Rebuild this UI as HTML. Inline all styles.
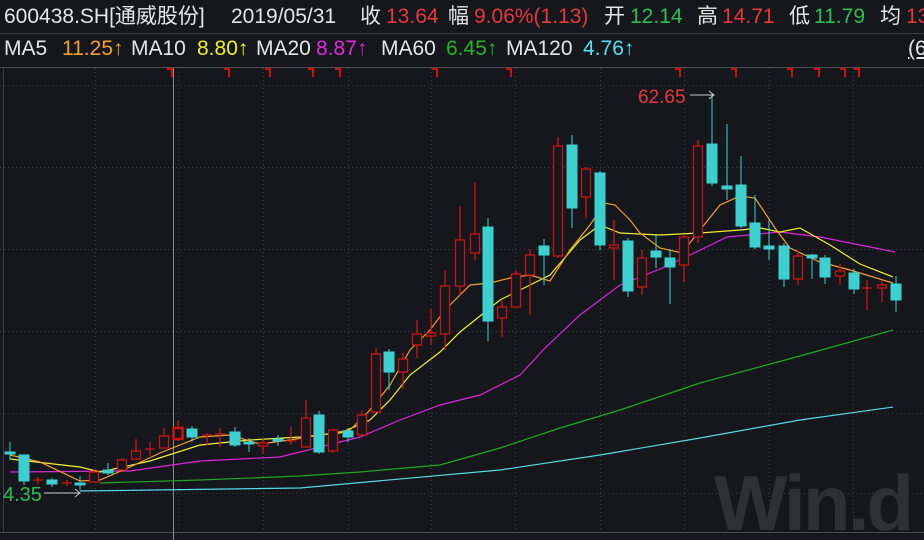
<!DOCTYPE html>
<html><head><meta charset="utf-8"><style>
body{margin:0;width:924px;height:540px;background:#15171c;overflow:hidden;font-family:"Liberation Sans","Noto Sans CJK SC",sans-serif;}
.t{position:absolute;font-size:21px;line-height:24px;white-space:nowrap;color:#e6e6e6;top:5px}
.m{top:37px}
.r{color:#e8383c}.g{color:#2bbf52}
</style></head><body>
<div class="t" style="left:4px">600438.SH[通威股份]</div>
<div class="t" style="left:231px">2019/05/31</div>
<div class="t" style="left:360px">收</div><div class="t r" style="left:386px">13.64</div>
<div class="t" style="left:448px">幅</div><div class="t r" style="left:474px">9.06%(1.13)</div>
<div class="t" style="left:604px">开</div><div class="t g" style="left:630px">12.14</div>
<div class="t" style="left:697px">高</div><div class="t r" style="left:722px">14.71</div>
<div class="t" style="left:789px">低</div><div class="t g" style="left:814px">11.79</div>
<div class="t" style="left:880px">均</div><div class="t r" style="left:906px">13</div>
<div class="t m" style="left:4px">MA5</div><div class="t m" style="left:62px;color:#f0a028">11.25↑</div>
<div class="t m" style="left:131px">MA10</div><div class="t m" style="left:197px;color:#f0f020">8.80↑</div>
<div class="t m" style="left:256px">MA20</div><div class="t m" style="left:316px;color:#e028e0">8.87↑</div>
<div class="t m" style="left:381px">MA60</div><div class="t m" style="left:446px;color:#22b422">6.45↑</div>
<div class="t m" style="left:506px">MA120</div><div class="t m" style="left:583px;color:#50e0f0">4.76↑</div>
<div class="t m" style="left:908px;text-decoration:underline">(6</div>
<svg width="924" height="540" style="position:absolute;left:0;top:0" xmlns="http://www.w3.org/2000/svg">
<line x1="0" y1="33.5" x2="924" y2="33.5" stroke="#3a3c42"/>
<line x1="0" y1="67.5" x2="924" y2="67.5" stroke="#4a4c52"/>
<line x1="0" y1="532.5" x2="924" y2="532.5" stroke="#4a4c52"/>
<line x1="3.5" y1="68" x2="3.5" y2="532" stroke="#3a3c42"/>
<g stroke="#3c3f46" stroke-dasharray="1,3">
<line x1="0" y1="85.5" x2="924" y2="85.5"/><line x1="0" y1="167.5" x2="924" y2="167.5"/><line x1="0" y1="249.5" x2="924" y2="249.5"/><line x1="0" y1="331.5" x2="924" y2="331.5"/><line x1="0" y1="413.5" x2="924" y2="413.5"/><line x1="0" y1="493.5" x2="924" y2="493.5"/>
<line x1="95.5" y1="68" x2="95.5" y2="532"/><line x1="178.5" y1="68" x2="178.5" y2="532"/><line x1="263.5" y1="68" x2="263.5" y2="532"/><line x1="348.5" y1="68" x2="348.5" y2="532"/><line x1="431.5" y1="68" x2="431.5" y2="532"/><line x1="515.5" y1="68" x2="515.5" y2="532"/><line x1="600.5" y1="68" x2="600.5" y2="532"/><line x1="684.5" y1="68" x2="684.5" y2="532"/><line x1="769.5" y1="68" x2="769.5" y2="532"/><line x1="853.5" y1="68" x2="853.5" y2="532"/>
</g>
<line x1="173.5" y1="68" x2="173.5" y2="540" stroke="#8a8c90"/>
<text x="714" y="530" font-family="Liberation Sans,sans-serif" font-weight="bold" font-size="78" fill="#2e3034" textLength="200">Win.d</text>
<g stroke="#d01010" stroke-width="2" fill="none">
<path d="M167 69h5v8M224 69h5v8M265 69h5v8M308 69h5v8M335 69h5v8M432 69h5v8M506 69h5v8M675 69h5v8M731 69h5v8M787 69h5v8M814 69h5v8M840 69h5v8M854 69h5v8"/>
</g>
<g fill="none" stroke-width="1.2">
<polyline stroke="#58d8e8" points="80,491 300,488 500,470 600,455 700,438 800,420 893,407"/>
<polyline stroke="#22a822" points="100,483 200,480 300,476 360,472 440,465 500,448 560,428 620,410 700,383 800,356 893,330"/>
<polyline stroke="#d828d8" points="10,472 130,471 200,461 280,457 360,437 400,420 440,405 480,395 520,375 545,348 580,315 620,285 660,269 690,255 727,237 780,232 820,237 860,245 895,252"/>
<polyline stroke="#f0f030" points="10,459 80,467 100,472 150,461 200,445 250,440 300,437 340,433 370,420 390,400 410,375 440,352 460,332 480,316 500,300 530,285 550,275 580,240 600,225 620,233 660,235 700,233 740,230 760,228 780,232 800,228 830,245 860,264 893,277"/>
<polyline stroke="#f0a030" points="10,455 40,462 80,481 100,480 130,467 160,453 200,437 230,435 260,444 290,440 320,435 350,430 370,410 390,385 410,350 430,330 445,310 470,285 490,283 510,278 530,275 550,281 570,250 590,225 605,203 615,205 630,220 640,233 660,248 682,253 700,230 720,205 740,196 755,198 775,228 790,248 820,262 850,270 893,283"/>
</g>
<g stroke="#3cd0d0" fill="#3cd0d0">
<path d="M10 442V460M24 455V485M52 478V487M80 476V490M108 463V475M192 426V442M235 427V447M249 438V452M278 435V446M319 411V454M348 428V442M389 349V390M488 218V341M544 239V285M572 135V228M600 171V250M628 238V297M656 235V268M670 249V304M712 94V186M727 124V200M741 156V228M755 195V249M769 220V260M784 243V287M812 254V279M825 255V284M854 269V294M896 276V312" fill="none"/>
<rect x="5" y="452" width="10" height="2"/><rect x="19" y="455" width="10" height="26"/><rect x="47" y="480" width="10" height="4"/><rect x="75" y="483" width="10" height="2"/><rect x="103" y="470" width="10" height="3"/><rect x="187" y="429" width="10" height="8"/><rect x="230" y="432" width="10" height="13"/><rect x="244" y="442" width="10" height="2"/><rect x="273" y="439" width="10" height="2"/><rect x="314" y="415" width="10" height="37"/><rect x="343" y="431" width="10" height="6"/><rect x="384" y="352" width="10" height="20"/><rect x="483" y="227" width="10" height="94"/><rect x="539" y="246" width="10" height="9"/><rect x="567" y="145" width="10" height="63"/><rect x="595" y="173" width="10" height="72"/><rect x="623" y="241" width="10" height="50"/><rect x="651" y="251" width="10" height="6"/><rect x="665" y="258" width="10" height="9"/><rect x="707" y="144" width="10" height="39"/><rect x="722" y="186" width="10" height="3"/><rect x="736" y="185" width="10" height="41"/><rect x="750" y="223" width="10" height="24"/><rect x="764" y="246" width="10" height="3"/><rect x="779" y="246" width="10" height="33"/><rect x="807" y="255" width="10" height="3"/><rect x="820" y="258" width="10" height="19"/><rect x="849" y="273" width="10" height="16"/><rect x="891" y="284" width="10" height="16"/>
</g>
<g stroke="#cc1414" fill="none" stroke-width="1.3">
<path d="M38 477V484M33 480H43M67 480V486M62 483H72M94 469V482M122 458V470M136 439V459M150 442V456M145 449H155M164 428V448M178 421V441M207 433V446M202 435H212M220 428V447M215 434H225M263 439V454M291 427V445M286 441H296M306 400V447M333 430V453M362 410V435M376 348V412M403 353V389M417 320V358M431 309V345M445 270V350M460 206V295M475 182V260M502 301V337M516 270V307M530 249V315M558 137V258M586 167V218M614 220V280M642 250V295M684 234V282M698 140V243M798 250V285M840 264V285M867 280V310M862 288H872M882 280V302"/>
<rect x="89.5" y="472" width="9" height="10" fill="#15171c"/><rect x="117.5" y="460" width="9" height="10" fill="#15171c"/><rect x="131.5" y="451" width="9" height="8" fill="#15171c"/><rect x="159.5" y="436" width="9" height="12" fill="#15171c"/><rect x="173.5" y="428" width="9" height="11" fill="#15171c" stroke-width="2.5"/><rect x="258.5" y="443" width="9" height="3" fill="#15171c"/><rect x="301.5" y="418" width="9" height="29" fill="#15171c"/><rect x="328.5" y="430" width="9" height="21" fill="#15171c"/><rect x="357.5" y="415" width="9" height="20" fill="#15171c"/><rect x="371.5" y="354" width="9" height="58" fill="#15171c"/><rect x="398.5" y="359" width="9" height="13" fill="#15171c"/><rect x="412.5" y="334" width="9" height="11" fill="#15171c"/><rect x="426.5" y="333" width="9" height="3" fill="#15171c"/><rect x="440.5" y="286" width="9" height="48" fill="#15171c"/><rect x="455.5" y="240" width="9" height="46" fill="#15171c"/><rect x="470.5" y="234" width="9" height="19" fill="#15171c"/><rect x="497.5" y="307" width="9" height="11" fill="#15171c"/><rect x="511.5" y="274" width="9" height="33" fill="#15171c"/><rect x="525.5" y="255" width="9" height="20" fill="#15171c"/><rect x="553.5" y="146" width="9" height="110" fill="#15171c"/><rect x="581.5" y="169" width="9" height="28" fill="#15171c"/><rect x="609.5" y="245" width="9" height="3" fill="#15171c"/><rect x="637.5" y="258" width="9" height="29" fill="#15171c"/><rect x="679.5" y="237" width="9" height="28" fill="#15171c"/><rect x="693.5" y="146" width="9" height="91" fill="#15171c"/><rect x="793.5" y="256" width="9" height="23" fill="#15171c"/><rect x="835.5" y="271" width="9" height="5" fill="#15171c"/><rect x="877.5" y="285" width="9" height="3" fill="#15171c"/>
</g>
<text x="638" y="103" font-family="Liberation Sans,sans-serif" font-size="19" fill="#e8383c">62.65</text>
<path d="M690 95H714M709 91l5 4-5 4" stroke="#c8c8c8" fill="none"/>
<text x="3" y="501" font-family="Liberation Sans,sans-serif" font-size="20" fill="#2bbf52">4.35</text>
<path d="M44 493H80M75 489l5 4-5 4" stroke="#c8c8c8" fill="none"/>
</svg>
</body></html>
